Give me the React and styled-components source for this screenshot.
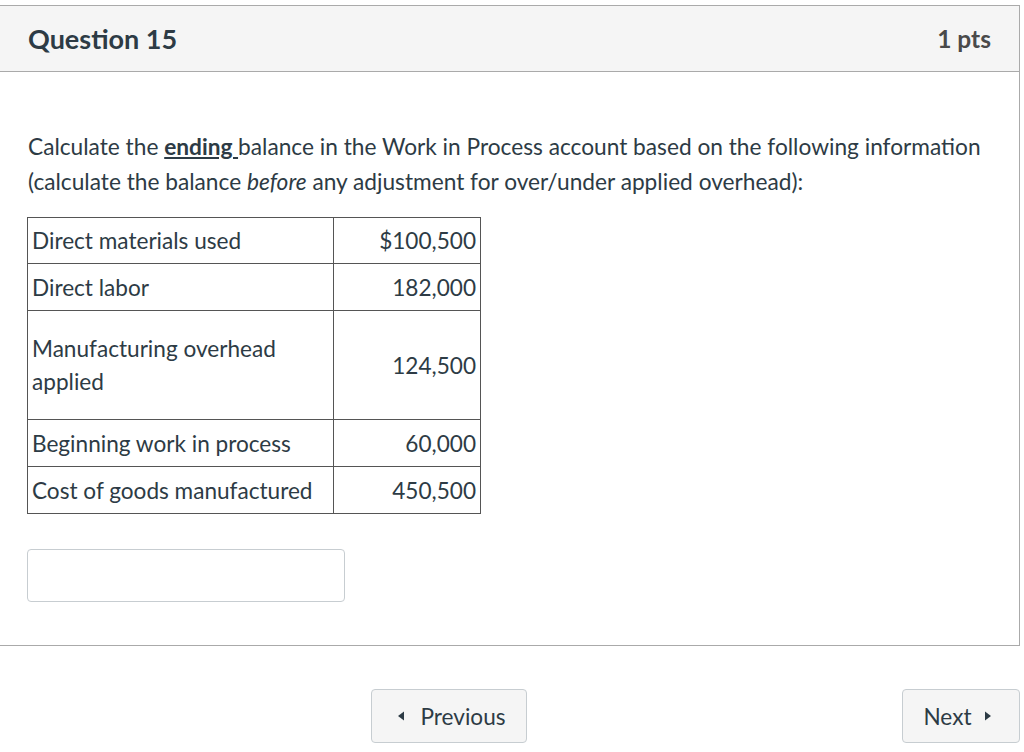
import React from "react";
import styled, { createGlobalStyle } from "styled-components";

const Global = createGlobalStyle`
  html, body { margin: 0; padding: 0; background: #fff; }
  body { font-family: Lato, "Open Sans", "Liberation Sans", sans-serif; color: #2d3b45; }
  * { box-sizing: border-box; }
`;

const Page = styled.div`
  padding-top: 5px;
  width: 1024px;
`;

const Card = styled.section`
  margin-left: -1px;
  width: 1021px;
  border: 1px solid #aaa;
  background: #fff;
`;

const Header = styled.header`
  height: 66px;
  background: #f5f5f5;
  border-bottom: 1px solid #aaa;
  display: flex;
  align-items: center;
  justify-content: space-between;
  padding: 0 28px 0 28px;
`;

const Title = styled.h2`
  margin: 0;
  font-size: 27px;
  font-weight: 700;
  color: #2d3b45;
`;

const Points = styled.span`
  font-size: 24.5px;
  font-weight: 700;
  color: #4a4a4a;
`;

const Body = styled.div`
  padding: 57px 28px 43px 28px;
`;

const Prompt = styled.p`
  margin: 0 0 18px;
  font-size: 22.7px;
  line-height: 35px;
`;

const Key = styled.span`
  font-weight: 700;
  text-decoration: underline;
`;

const Table = styled.table`
  border-collapse: collapse;
  width: 454px;
  margin-left: -1px;
  font-size: 22.6px;
`;

const Row = styled.tr`
  height: ${(p) => p.$h}px;
`;

const Cell = styled.td`
  border: 1px solid #555;
  padding: 0 4px;
  line-height: 33px;
  vertical-align: middle;
  text-align: ${(p) => (p.$num ? "right" : "left")};
  width: ${(p) => (p.$num ? "147px" : "307px")};
`;

const Answer = styled.input`
  display: block;
  margin: 35px 0 0 -1px;
  width: 318px;
  height: 53px;
  border: 1px solid #c7cdd1;
  border-radius: 4px;
  background: #fff;
  font-size: 20px;
  font-family: inherit;
`;

const Footer = styled.nav`
  display: flex;
  justify-content: space-between;
  padding: 43px 4px 0 371px;
`;

const NavButton = styled.button`
  height: 54px;
  width: ${(p) => p.$w}px;
  display: flex;
  align-items: center;
  justify-content: center;
  gap: ${(p) => p.$gap}px;
  padding: 0 ${(p) => p.$pr}px 0 ${(p) => p.$pl}px;
  background: #f5f5f5;
  border: 1px solid #c7cdd1;
  border-radius: 4px;
  color: #2d3b45;
  font-family: inherit;
  font-size: 22.6px;
`;

const Caret = styled.svg`
  width: 7px;
  height: 10px;
  fill: #2d3b45;
`;

const rows = [
  ["Direct materials used", "$100,500", 46],
  ["Direct labor", "182,000", 47],
  ["Manufacturing overhead applied", "124,500", 109],
  ["Beginning work in process", "60,000", 47],
  ["Cost of goods manufactured", "450,500", 47],
];

export default function App() {
  return (
    <Page>
      <Global />
      <Card>
        <Header>
          <Title>Question 15</Title>
          <Points>1 pts</Points>
        </Header>
        <Body>
          <Prompt>
            Calculate the <Key>ending </Key>balance in the Work in Process account based on the following
            information (calculate the balance <em>before</em> any adjustment for over/under applied overhead):
          </Prompt>
          <Table>
            <tbody>
              {rows.map(([label, value, h]) => (
                <Row key={label} $h={h}>
                  <Cell>{label === "Manufacturing overhead applied" ? (<>Manufacturing overhead<br />applied</>) : label}</Cell>
                  <Cell $num>{value}</Cell>
                </Row>
              ))}
            </tbody>
          </Table>
          <Answer type="text" aria-label="answer" />
        </Body>
      </Card>
      <Footer>
        <NavButton $w={156} $gap={15} $pl={6} $pr={0}>
          <Caret viewBox="0 0 7 10"><polygon points="6,0.5 6,9.5 0,5" /></Caret>
          Previous
        </NavButton>
        <NavButton $w={118} $gap={12} $pl={0} $pr={8}>
          Next
          <Caret viewBox="0 0 7 10"><polygon points="1,0.5 1,9.5 7,5" /></Caret>
        </NavButton>
      </Footer>
    </Page>
  );
}
